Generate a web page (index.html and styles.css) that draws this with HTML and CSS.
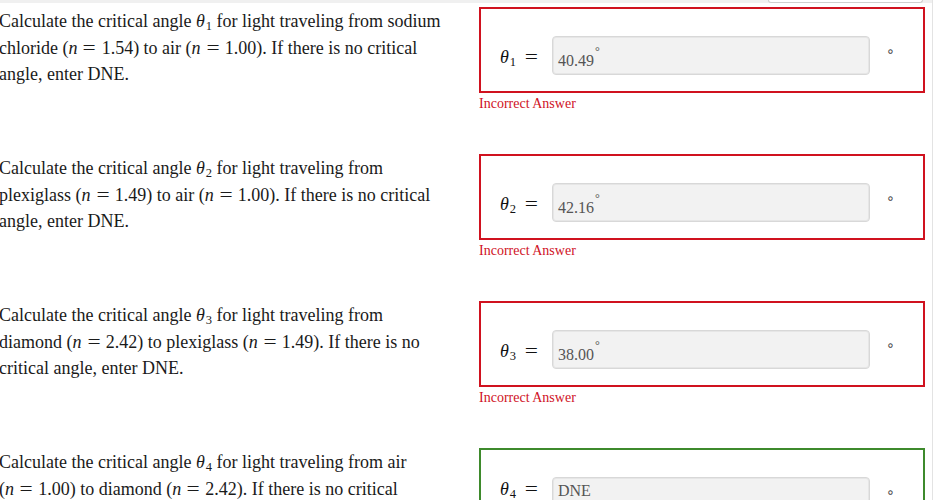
FILE: index.html
```html
<!DOCTYPE html>
<html>
<head>
<meta charset="utf-8">
<link rel="stylesheet" href="styles.css">
</head>
<body>
<div class="page">
  <div class="topbar"><div class="topbtn"></div></div>

  <div class="question">
    <div class="prompt">Calculate the critical angle <span class="mi">θ</span><sub class="sub">1</sub> for light traveling from sodium<br>chloride (<span class="mi">n</span><span class="eq">=</span>1.54) to air (<span class="mi">n</span><span class="eq">=</span>1.00). If there is no critical<br>angle, enter DNE.</div>
    <div class="answer">
      <div class="box wrong">
        <div class="label"><span class="mi">θ</span><sub class="sub">1</sub><span class="eq">=</span></div>
        <div class="field">40.49<span class="deg">°</span></div>
        <div class="unit">∘</div>
      </div>
      <div class="feedback">Incorrect Answer</div>
    </div>
  </div>

  <div class="question">
    <div class="prompt">Calculate the critical angle <span class="mi">θ</span><sub class="sub">2</sub> for light traveling from<br>plexiglass (<span class="mi">n</span><span class="eq">=</span>1.49) to air (<span class="mi">n</span><span class="eq">=</span>1.00). If there is no critical<br>angle, enter DNE.</div>
    <div class="answer">
      <div class="box wrong">
        <div class="label"><span class="mi">θ</span><sub class="sub">2</sub><span class="eq">=</span></div>
        <div class="field">42.16<span class="deg">°</span></div>
        <div class="unit">∘</div>
      </div>
      <div class="feedback">Incorrect Answer</div>
    </div>
  </div>

  <div class="question">
    <div class="prompt">Calculate the critical angle <span class="mi">θ</span><sub class="sub">3</sub> for light traveling from<br>diamond (<span class="mi">n</span><span class="eq">=</span>2.42) to plexiglass (<span class="mi">n</span><span class="eq">=</span>1.49). If there is no<br>critical angle, enter DNE.</div>
    <div class="answer">
      <div class="box wrong">
        <div class="label"><span class="mi">θ</span><sub class="sub">3</sub><span class="eq">=</span></div>
        <div class="field">38.00<span class="deg">°</span></div>
        <div class="unit">∘</div>
      </div>
      <div class="feedback">Incorrect Answer</div>
    </div>
  </div>

  <div class="question">
    <div class="prompt">Calculate the critical angle <span class="mi">θ</span><sub class="sub">4</sub> for light traveling from air<br>(<span class="mi">n</span><span class="eq">=</span>1.00) to diamond (<span class="mi">n</span><span class="eq">=</span>2.42). If there is no critical<br>angle, enter DNE.</div>
    <div class="answer">
      <div class="box right plain">
        <div class="label"><span class="mi">θ</span><sub class="sub">4</sub><span class="eq">=</span></div>
        <div class="field">DNE</div>
        <div class="unit">∘</div>
      </div>
    </div>
  </div>
</div>
</body>
</html>
```

FILE: styles.css
```css
html, body {
  margin: 0;
  padding: 0;
  background: #fff;
}
body {
  font-family: "Liberation Serif", "Times New Roman", serif;
  color: #222;
}
.page {
  width: 932px;
  height: 500px;
  overflow: hidden;
  border-right: 1px solid #e3e3e3;
}
.topbar {
  height: 3px;
  background: #f0f0f0;
  display: flex;
  justify-content: flex-end;
  padding-right: 9px;
}
.topbtn {
  width: 153px;
  height: 2px;
  background: #fff;
  border: 1px solid #cfcfcf;
  border-top: none;
  border-radius: 0 0 4px 4px;
}
.question {
  display: flex;
  height: 147px;
}
.prompt {
  width: 445px;
  padding-top: 5px;
  margin-left: -1px;
  font-size: 18px;
  line-height: 26.5px;
  color: #1a1a1a;
}
.mi {
  font-style: italic;
}
.sub {
  font-size: 12.5px;
  line-height: 0;
  vertical-align: -3px;
  margin-left: 1px;
}
.eq {
  display: inline-block;
  transform: scaleX(1.3);
  padding: 0 7px;
}
.answer {
  margin-left: 35px;
  padding-top: 4px;
  width: 446px;
}
.box {
  border: 2px solid #d0121f;
  display: flex;
  align-items: flex-start;
  padding-top: 27px;
  box-sizing: border-box;
  height: 86px;
}
.box.right {
  border-color: #3e8a2c;
}
.label {
  width: 52px;
  padding-left: 19px;
  height: 39px;
  line-height: 39px;
  font-size: 18px;
  color: #111;
  padding-top: 2px;
  box-sizing: content-box;
}
.label .eq {
  padding: 0 0 0 9px;
}
.field {
  width: 311px;
  height: 37px;
  border: 1px solid #d8d8d8;
  border-radius: 4px;
  background: #f2f2f2;
  padding-left: 5px;
  font-size: 16px;
  line-height: 47px;
  color: #555;
  box-shadow: inset 0 0 0 1px #e6e6e6;
}
.box.plain .field {
  line-height: 26px;
}
.box.plain .label {
  line-height: 24px;
  padding-top: 0;
}
.deg {
  font-size: 12px;
  vertical-align: 11px;
  line-height: 0;
  margin-left: 1px;
}
.unit {
  margin-left: 16px;
  height: 39px;
  line-height: 30px;
  font-size: 14px;
  color: #444;
  font-family: "DejaVu Sans", sans-serif;
}
.feedback {
  margin-top: 2px;
  font-size: 14px;
  color: #d0121f;
  line-height: 17px;
}
```
